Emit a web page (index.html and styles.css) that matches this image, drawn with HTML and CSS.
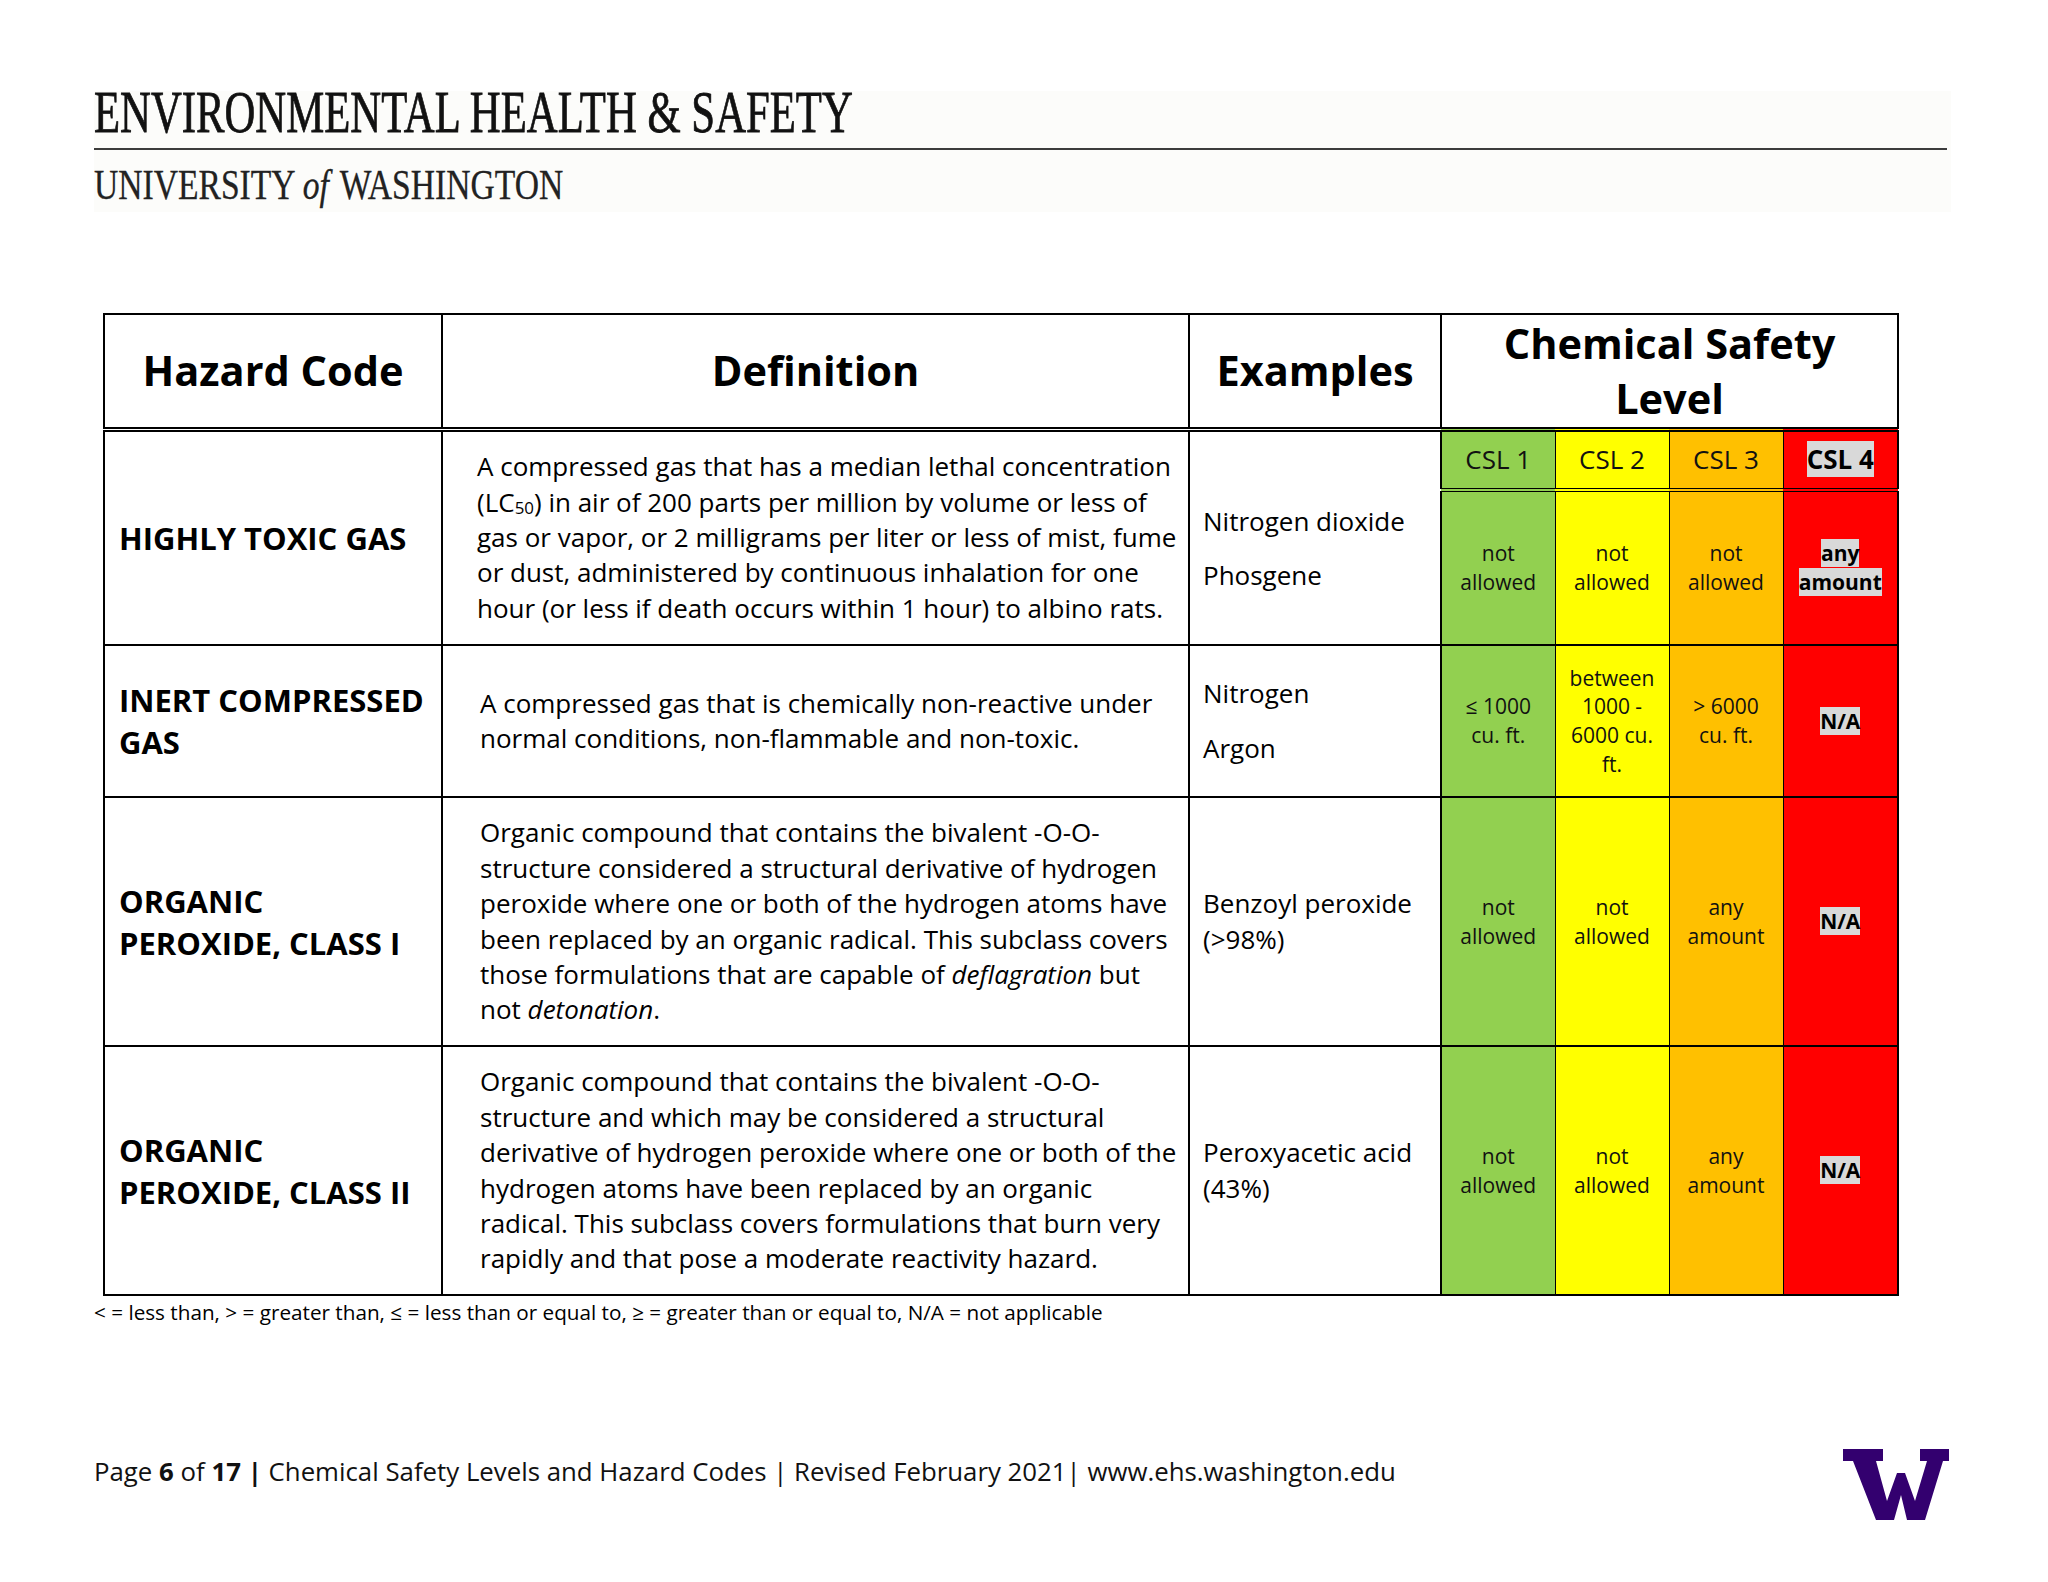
FILE: index.html
```html
<!DOCTYPE html>
<html lang="en">
<head>
<meta charset="utf-8">
<title>Chemical Safety Levels and Hazard Codes</title>
<link rel="stylesheet" href="styles.css">
</head>
<body>
<div class="page">
  <header class="banner">
    <div class="title"><span>ENVIRONMENTAL HEALTH &amp; SAFETY</span></div>
    <div class="rule"></div>
    <div class="subtitle"><span>UNIVERSITY <i>of</i> WASHINGTON</span></div>
  </header>

  <table class="hz">
    <colgroup>
      <col class="w-code"><col class="w-def"><col class="w-ex">
      <col class="w-csl"><col class="w-csl"><col class="w-csl"><col class="w-csl4">
    </colgroup>
    <tr class="head">
      <th>Hazard Code</th>
      <th>Definition</th>
      <th>Examples</th>
      <th colspan="4">Chemical Safety<br>Level</th>
    </tr>
    <tr class="csl-head">
      <td class="code" rowspan="2">HIGHLY TOXIC GAS</td>
      <td class="def" rowspan="2">A compressed gas that has a median lethal concentration<br>(LC<sub>50</sub>) in air of 200 parts per million by volume or less of<br>gas or vapor, or 2 milligrams per liter or less of mist, fume<br>or dust, administered by continuous inhalation for one<br>hour (or less if death occurs within 1 hour) to albino rats.</td>
      <td class="ex ex-first" rowspan="2"><div class="ex-list"><span>Nitrogen dioxide</span><span>Phosgene</span></div></td>
      <td class="lvl c1">CSL 1</td>
      <td class="lvl c2">CSL 2</td>
      <td class="lvl c3">CSL 3</td>
      <td class="lvl c4"><span class="hl">CSL 4</span></td>
    </tr>
    <tr class="r1">
      <td class="v c1">not<br>allowed</td>
      <td class="v c2">not<br>allowed</td>
      <td class="v c3">not<br>allowed</td>
      <td class="v c4"><span class="hl">any</span><br><span class="hl">amount</span></td>
    </tr>
    <tr class="r2">
      <td class="code">INERT COMPRESSED<br>GAS</td>
      <td class="def def-pad">A compressed gas that is chemically non-reactive under<br>normal conditions, non-flammable and non-toxic.</td>
      <td class="ex"><div class="ex-list"><span>Nitrogen</span><span>Argon</span></div></td>
      <td class="v c1">≤ 1000<br>cu. ft.</td>
      <td class="v c2">between<br>1000 -<br>6000 cu.<br>ft.</td>
      <td class="v c3">&gt; 6000<br>cu. ft.</td>
      <td class="v c4"><span class="hl">N/A</span></td>
    </tr>
    <tr class="r3">
      <td class="code">ORGANIC<br>PEROXIDE, CLASS I</td>
      <td class="def def-pad">Organic compound that contains the bivalent -O-O-<br>structure considered a structural derivative of hydrogen<br>peroxide where one or both of the hydrogen atoms have<br>been replaced by an organic radical. This subclass covers<br>those formulations that are capable of <i>deflagration</i> but<br>not <i>detonation</i>.</td>
      <td class="ex">Benzoyl peroxide<br>(&gt;98%)</td>
      <td class="v c1">not<br>allowed</td>
      <td class="v c2">not<br>allowed</td>
      <td class="v c3">any<br>amount</td>
      <td class="v c4"><span class="hl">N/A</span></td>
    </tr>
    <tr class="r3">
      <td class="code">ORGANIC<br>PEROXIDE, CLASS II</td>
      <td class="def def-pad">Organic compound that contains the bivalent -O-O-<br>structure and which may be considered a structural<br>derivative of hydrogen peroxide where one or both of the<br>hydrogen atoms have been replaced by an organic<br>radical. This subclass covers formulations that burn very<br>rapidly and that pose a moderate reactivity hazard.</td>
      <td class="ex">Peroxyacetic acid<br>(43%)</td>
      <td class="v c1">not<br>allowed</td>
      <td class="v c2">not<br>allowed</td>
      <td class="v c3">any<br>amount</td>
      <td class="v c4"><span class="hl">N/A</span></td>
    </tr>
  </table>

  <p class="note">&lt; = less than, &gt; = greater than, ≤ = less than or equal to, ≥ = greater than or equal to, N/A = not applicable</p>

  <footer class="footer">
    <div class="foot-text">Page <b>6</b> of <b>17</b> <b>|</b> Chemical Safety Levels and Hazard Codes | Revised February 2021| www.ehs.washington.edu</div>
    <svg class="logo" viewBox="0 0 106 71" width="106" height="71" aria-label="UW">
      <path d="M0 0H40V12H33L44 52L54 24H62L72 52L84 12H77V0H106V12H100L82 71H64L58 46L51 71H33L10 12H0Z"/>
    </svg>
  </footer>
</div>
</body>
</html>
```

FILE: styles.css
```css
html, body {
  margin: 0;
  padding: 0;
  background: #ffffff;
}
body {
  font-family: "Open Sans", "Noto Sans", sans-serif;
  color: #000;
}
.page {
  padding-left: 94px;
  width: 1857px;
}

/* banner */
.banner {
  margin-top: 82px;
  padding-bottom: 6px;
  background: linear-gradient(#ffffff 0, #ffffff 9px, #fcfcfa 9px);
  width: 1857px;
}
.title {
  font-family: "Liberation Serif", serif;
  font-size: 60px;
  line-height: 60px;
  height: 60px;
  white-space: nowrap;
  color: #111;
  -webkit-text-stroke: 0.8px #111;
}
.title span,
.subtitle span {
  display: inline-block;
  transform-origin: 0 0;
}
.title span { transform: scaleX(0.712); }
.rule {
  margin-top: 6px;
  height: 2px;
  width: 1853px;
  background: #3c3c3c;
}
.subtitle {
  margin-top: 14px;
  font-family: "Liberation Serif", serif;
  font-size: 42px;
  line-height: 42px;
  height: 42px;
  white-space: nowrap;
  color: #222;
  -webkit-text-stroke: 0.3px #222;
}
.subtitle span { transform: scaleX(0.8); }
.subtitle i { margin-right: 4px; }

/* table */
.hz {
  margin-top: 101px;
  margin-left: 9px;
  border-collapse: collapse;
  table-layout: fixed;
  width: 1794px;
}
.w-code { width: 338px; }
.w-def { width: 747px; }
.w-ex { width: 252px; }
.w-csl { width: 114px; }
.w-csl4 { width: 115px; }

.hz th,
.hz td {
  border: 2px solid #000;
  padding: 0;
  vertical-align: middle;
}
.hz th {
  font-size: 41.5px;
  line-height: 55px;
  font-weight: 700;
  text-align: center;
  border-bottom: 5px double #000;
}
.head { height: 115px; }
.csl-head { height: 61px; }
.r1 { height: 155px; }
.r2 { height: 152px; }
.r3 { height: 249px; }

.code {
  font-size: 31px;
  line-height: 42px;
  font-weight: 700;
  padding-left: 14px !important;
  white-space: nowrap;
}
.def {
  font-size: 26px;
  line-height: 35.4px;
  padding-left: 34px !important;
  white-space: nowrap;
}
.def-pad { padding-left: 37px !important; }
.def sub {
  font-size: 0.65em;
  line-height: 0;
  vertical-align: -0.1em;
}
.ex {
  font-size: 26px;
  line-height: 35.4px;
  padding-left: 13px !important;
  white-space: nowrap;
}
.ex-list {
  display: flex;
  flex-direction: column;
  gap: 19px;
}
.ex-first .ex-list { padding-top: 22px; }

.lvl,
.v {
  text-align: center;
  color: #111;
  border-left-width: 1px !important;
  border-right-width: 1px !important;
}
.lvl {
  font-size: 26px;
  line-height: 35px;
  border-bottom: 4px double #000 !important;
}
.v {
  font-size: 21px;
  line-height: 28.6px;
}
.c1 { background: #92d050; }
.c2 { background: #ffff00; }
.c3 { background: #ffc000; }
.c4 { background: #ff0000; border-right-width: 2px !important; }
.hl {
  background: #d9d9d9;
  font-weight: 700;
  color: #000;
}

/* notes */
.note {
  margin: 2px 0 0;
  font-size: 20.7px;
  line-height: 28px;
}

.footer {
  margin-top: 123px;
  display: flex;
  justify-content: space-between;
  align-items: flex-start;
  width: 1855px;
}
.foot-text {
  padding-top: 5px;
  font-size: 25.8px;
  line-height: 35px;
  color: #111;
}
.logo {
  display: block;
  fill: #33006f;
}
```
